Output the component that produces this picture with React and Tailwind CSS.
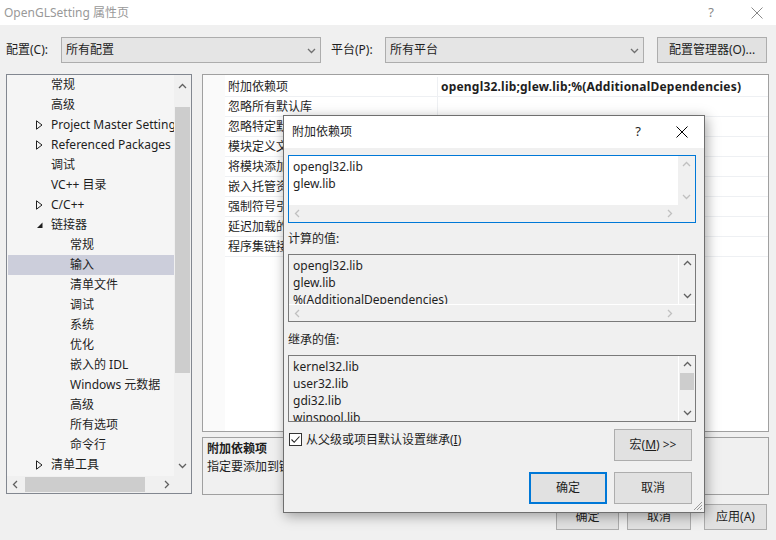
import React from 'react';

// small scroll / combo chevrons
function Chev({ dir = 'down', color = '#606060' }) {
  const paths = {
    up: 'M1 6 L4.5 2.5 L8 6',
    down: 'M1 3 L4.5 6.5 L8 3',
    left: 'M6 1 L2.5 4.5 L6 8',
    right: 'M3 1 L6.5 4.5 L3 8',
  };
  return (
    <svg width="9" height="9" viewBox="0 0 9 9">
      <path d={paths[dir]} fill="none" stroke={color} strokeWidth="1.3" />
    </svg>
  );
}

function CloseX({ color = '#000', size = 12 }) {
  return (
    <svg width={size} height={size} viewBox="0 0 12 12">
      <path d="M0.5 0.5 L11.5 11.5 M11.5 0.5 L0.5 11.5" stroke={color} strokeWidth="1" />
    </svg>
  );
}

const treeRows = [
  { t: '常规', lv: 1 },
  { t: '高级', lv: 1 },
  { t: 'Project Master Settings', lv: 1, arrow: 'closed' },
  { t: 'Referenced Packages', lv: 1, arrow: 'closed' },
  { t: '调试', lv: 1 },
  { t: 'VC++ 目录', lv: 1 },
  { t: 'C/C++', lv: 1, arrow: 'closed' },
  { t: '链接器', lv: 1, arrow: 'open' },
  { t: '常规', lv: 2 },
  { t: '输入', lv: 2, selected: true },
  { t: '清单文件', lv: 2 },
  { t: '调试', lv: 2 },
  { t: '系统', lv: 2 },
  { t: '优化', lv: 2 },
  { t: '嵌入的 IDL', lv: 2 },
  { t: 'Windows 元数据', lv: 2 },
  { t: '高级', lv: 2 },
  { t: '所有选项', lv: 2 },
  { t: '命令行', lv: 2 },
  { t: '清单工具', lv: 1, arrow: 'closed' },
];

const props = [
  { n: '附加依赖项', v: 'opengl32.lib;glew.lib;%(AdditionalDependencies)' },
  { n: '忽略所有默认库' },
  { n: '忽略特定默认库' },
  { n: '模块定义文件' },
  { n: '将模块添加到程序集' },
  { n: '嵌入托管资源文件' },
  { n: '强制符号引用' },
  { n: '延迟加载的 DLL' },
  { n: '程序集链接资源' },
];

function Combo({ text, className }) {
  return (
    <div className={`h-[26px] bg-[#e5e5e5] border border-[#adadad] flex items-center pl-[4px] pr-[4px] ${className}`}>
      <span className="leading-[16px]">{text}</span>
      <span className="ml-auto flex">
        <Chev dir="down" color="#707070" />
      </span>
    </div>
  );
}

function Tree() {
  return (
    <div className="w-[186px] h-[420px] border border-[#828790] bg-[#f5f5f5] flex flex-col">
      <div className="flex h-[401px]">
        <div className="w-[167px] overflow-hidden">
          {treeRows.map((r, i) => (
            <div
              key={i}
              className={`h-[20px] flex items-center whitespace-nowrap ${r.selected ? 'bg-[#cccedb] ml-[1px]' : ''}`}
            >
              <div className={`shrink-0 flex justify-end pr-[1px] ${r.selected ? 'w-[36px]' : 'w-[37px]'}`}>
                {r.arrow === 'closed' && (
                  <svg width="7" height="10" viewBox="0 0 7 10">
                    <path d="M0.5 0.8 L6 5 L0.5 9.2 Z" fill="none" stroke="#1e1e1e" strokeWidth="1" />
                  </svg>
                )}
                {r.arrow === 'open' && (
                  <svg width="7" height="10" viewBox="0 0 7 10">
                    <path d="M6.5 2.5 L6.5 8 L1 8 Z" fill="#1e1e1e" />
                  </svg>
                )}
              </div>
              <span className={`leading-[16px] ${r.lv === 2 ? 'pl-[26px]' : 'pl-[7px]'}`}>{r.t}</span>
            </div>
          ))}
        </div>
        <div className="w-[17px] bg-[#f0f0f0] flex flex-col">
          <div className="h-[22px] flex items-center justify-center">
            <Chev dir="up" />
          </div>
          <div className="mt-[10px] h-[266px] bg-[#cdcdcd] mx-[1px]" />
          <div className="mt-auto h-[22px] flex items-center justify-center">
            <Chev dir="down" />
          </div>
        </div>
      </div>
      <div className="h-[17px] bg-[#f0f0f0] flex items-center">
        <div className="w-[17px] flex justify-center">
          <Chev dir="left" />
        </div>
        <div className="ml-[1px] w-[120px] h-[15px] bg-[#cdcdcd]" />
        <div className="ml-[13px] w-[17px] flex justify-center">
          <Chev dir="right" />
        </div>
      </div>
    </div>
  );
}

function PropGrid() {
  return (
    <div className="h-[358px] border border-[#a0a0a0] bg-white flex">
      <div className="w-[22px] bg-[#fafafa]" />
      <div className="flex-1 pt-[2px]">
        {props.map((p, i) => (
          <div key={i} className="h-[20px] flex border-b border-[#eef0f3]">
            <div className="w-[213px] pl-[3px] flex items-center border-r border-[#eef0f3] overflow-hidden whitespace-nowrap">
              <span className="leading-[16px]">{p.n}</span>
            </div>
            <div className="flex-1 pl-[3px] flex items-center whitespace-nowrap overflow-hidden">
              {p.v && <span className="font-bold leading-[16px] tracking-[0.2px]">{p.v}</span>}
            </div>
          </div>
        ))}
      </div>
    </div>
  );
}

function Btn({ children, className = '' }) {
  return (
    <div className={`bg-[#e1e1e1] border border-[#adadad] flex items-center justify-center ${className}`}>
      <span className="leading-[16px]">{children}</span>
    </div>
  );
}

// multi-line edit box with scrollbars
function EditBox({ lines, focused, readOnly, thumb, hscroll = true, h }) {
  return (
    <div className={`${h} border flex flex-col ${focused ? 'border-[#0078d7]' : 'border-[#7a7a7a]'}`}>
      <div className="flex flex-1 min-h-0">
        <div className={`flex-1 overflow-hidden pl-[4px] pt-[2px] ${readOnly ? 'bg-[#f0f0f0]' : 'bg-white'}`}>
          {lines.map((l, i) => (
            <div key={i} className="h-[17px] leading-[17px] whitespace-nowrap">{l}</div>
          ))}
        </div>
        <div className={`w-[17px] flex flex-col bg-[#f0f0f0] ${readOnly ? 'border-l border-white' : ''}`}>
          <div className="h-[17px] flex items-center justify-center">
            <Chev dir="up" color={readOnly ? '#606060' : '#c0c0c0'} />
          </div>
          {thumb && <div className="h-[17px] bg-[#cdcdcd] mx-[1px]" />}
          <div className="mt-auto h-[17px] flex items-center justify-center">
            <Chev dir="down" color={readOnly ? '#606060' : '#c0c0c0'} />
          </div>
        </div>
      </div>
      {hscroll && (
        <div className={`h-[17px] bg-[#f0f0f0] flex items-center ${readOnly ? 'border-t border-white' : ''}`}>
          <div className="w-[17px] flex justify-center">
            <Chev dir="left" color="#c0c0c0" />
          </div>
          <div className="ml-auto mr-[17px] w-[17px] flex justify-center">
            <Chev dir="right" color="#c0c0c0" />
          </div>
        </div>
      )}
    </div>
  );
}

function Dialog() {
  return (
    <div className="absolute left-[283px] top-[115px] w-[422px] h-[398px] border border-[#6f6f6f] bg-[#f0f0f0] shadow-[2px_3px_12px_rgba(0,0,0,0.35)] flex flex-col">
      <div className="h-[32px] bg-white flex items-center pl-[8px] pr-[16px]">
        <span className="leading-[16px]">附加依赖项</span>
        <span className="ml-auto mr-[35px] text-[13px]">?</span>
        <CloseX />
      </div>
      <div className="pl-[4px] pr-[8px] pt-[7px] flex flex-col">
        <EditBox h="h-[68px]" focused lines={['opengl32.lib', 'glew.lib']} />
        <div className="h-[31px] pt-[8px] leading-[16px]">计算的值:</div>
        <EditBox h="h-[68px]" readOnly lines={['opengl32.lib', 'glew.lib', '%(AdditionalDependencies)']} />
        <div className="h-[33px] pt-[10px] leading-[16px]">继承的值:</div>
        <EditBox
          h="h-[67px]"
          readOnly
          thumb
          hscroll={false}
          lines={['kernel32.lib', 'user32.lib', 'gdi32.lib', 'winspool.lib']}
        />
        <div className="flex items-start mt-[7px] mr-[4px]">
          <div className="mt-[4px] ml-[1px] w-[13px] h-[13px] border border-[#333] bg-white flex items-center justify-center">
            <svg width="11" height="11" viewBox="0 0 11 11">
              <path d="M1.5 5.5 L4.2 8.3 L9.5 2.5" fill="none" stroke="#222" strokeWidth="1.1" />
            </svg>
          </div>
          <span className="ml-[4px] mt-[2px] leading-[17px]">
            从父级或项目默认设置继承(<span className="underline">I</span>)
          </span>
          <Btn className="ml-auto w-[78px] h-[32px]">
            宏(<span className="underline">M</span>) &gt;&gt;
          </Btn>
        </div>
        <div className="flex justify-end mt-[11px] mr-[4px] gap-[7px]">
          <div className="w-[78px] h-[32px] border-2 border-[#0078d7] bg-[#e1e1e1] flex items-center justify-center">
            <span className="leading-[16px]">确定</span>
          </div>
          <Btn className="w-[78px] h-[32px]">取消</Btn>
        </div>
      </div>
      <svg className="absolute right-[1px] bottom-[1px]" width="10" height="10" viewBox="0 0 10 10">
        <path d="M9 1 L1 9 M9 4 L4 9 M9 7 L7 9" stroke="#9a9a9a" strokeWidth="1" />
      </svg>
    </div>
  );
}

export default function App() {
  return (
    <div className="w-[776px] h-[540px] bg-[#f0f0f0] relative overflow-hidden font-['Noto_Sans','Noto_Sans_CJK_SC',sans-serif] text-[12px] text-[#1e1e1e]">
      {/* title bar */}
      <div className="h-[25px] bg-white flex items-center pl-[4px] pr-[13px]">
        <span className="text-[#999] leading-[16px] text-[12px]">OpenGLSetting 属性页</span>
        <span className="ml-auto mr-[37px] text-[#888] text-[13px]">?</span>
        <CloseX color="#888" />
      </div>

      {/* config row */}
      <div className="flex items-center h-[26px] mt-[12px] pl-[6px]">
        <span className="w-[55px] leading-[16px]">配置(C):</span>
        <Combo text="所有配置" className="w-[260px]" />
        <span className="ml-[10px] w-[54px] leading-[16px]">平台(P):</span>
        <Combo text="所有平台" className="w-[259px]" />
        <Btn className="ml-[13px] w-[110px] h-[26px]">配置管理器(O)...</Btn>
      </div>

      {/* main area */}
      <div className="flex mt-[11px] pl-[6px] h-[421px]">
        <Tree />
        <div className="ml-[10px] w-[567px] flex flex-col">
          <PropGrid />
          <div className="mt-[5px] h-[58px] border border-[#a0a0a0] bg-[#f0f0f0] px-[4px] pt-[2px]">
            <div className="font-bold leading-[18px]">附加依赖项</div>
            <div className="leading-[18px]">指定要添加到链接命令行的附加项。[例如 kernel32.lib]</div>
          </div>
        </div>
      </div>

      {/* bottom buttons */}
      <div className="flex justify-end pr-[9px] mt-[9px]">
        <Btn className="w-[63px] h-[26px]">确定</Btn>
        <Btn className="ml-[8px] w-[64px] h-[26px]">取消</Btn>
        <Btn className="ml-[13px] w-[63px] h-[26px]">应用(A)</Btn>
      </div>

      <Dialog />
    </div>
  );
}
